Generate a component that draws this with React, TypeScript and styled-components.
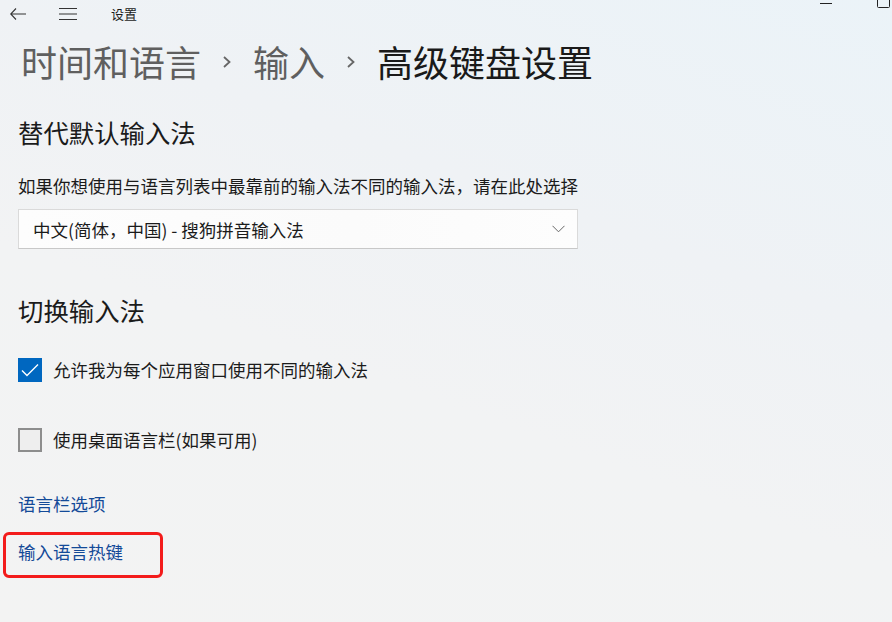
import React from 'react'
import styled, { createGlobalStyle } from 'styled-components'

const GlobalStyle = createGlobalStyle`
  html, body {
    margin: 0;
    padding: 0;
  }
  body {
    font-family: "Noto Sans CJK SC", "Noto Sans", sans-serif;
    color: #1b1b1b;
  }
`

const crumbs = ['时间和语言', '输入']

const App = () => {
  return (
    <Page>
      <GlobalStyle />
      <TitleBar>
        <IconButton $width={16}>
          <svg width='16' height='12' viewBox='0 0 16 12'>
            <path d='M6 0.5 L0.7 6 L6 11.5 M0.7 6 H16' fill='none' stroke='#333' strokeWidth='1.1' />
          </svg>
        </IconButton>
        <IconButton $width={18} $left={33}>
          <svg width='18' height='12' viewBox='0 0 18 12'>
            <path d='M0 0.5 H18 M0 6 H18 M0 11.5 H18' fill='none' stroke='#333' strokeWidth='1.1' />
          </svg>
        </IconButton>
        <AppName>设置</AppName>
        <WindowControls>
          <svg width='12' height='8' viewBox='0 0 12 8'>
            <path d='M0 3.5 H12' stroke='#222' strokeWidth='1' />
          </svg>
          <svg width='13' height='8' viewBox='0 0 13 8'>
            <rect x='0.5' y='-4' width='12' height='11.5' rx='1' fill='none' stroke='#222' strokeWidth='1' />
          </svg>
        </WindowControls>
      </TitleBar>

      <Content>
        <Breadcrumb>
          {crumbs.map(c => (
            <React.Fragment key={c}>
              <Crumb>{c}</Crumb>
              <Chevron width='8' height='12' viewBox='0 0 8 12'>
                <path d='M1 1 L6.5 6 L1 11' fill='none' stroke='#666' strokeWidth='1.8' />
              </Chevron>
            </React.Fragment>
          ))}
          <Crumb $current>高级键盘设置</Crumb>
        </Breadcrumb>

        <SectionTitle $top={32}>替代默认输入法</SectionTitle>
        <Description>如果你想使用与语言列表中最靠前的输入法不同的输入法，请在此处选择</Description>
        <Select>
          <span>中文(简体，中国) - 搜狗拼音输入法</span>
          <svg width='13' height='8' viewBox='0 0 13 8'>
            <path d='M0.5 0.8 L6.5 6.8 L12.5 0.8' fill='none' stroke='#666' strokeWidth='1' />
          </svg>
        </Select>

        <SectionTitle $top={44}>切换输入法</SectionTitle>
        <CheckRow $top={31}>
          <CheckBox $checked>
            <svg width='18' height='14' viewBox='0 0 18 14'>
              <path d='M1 7.5 L6 12.5 L17 1.5' fill='none' stroke='#fff' strokeWidth='1.4' />
            </svg>
          </CheckBox>
          <CheckLabel>允许我为每个应用窗口使用不同的输入法</CheckLabel>
        </CheckRow>
        <CheckRow $top={46}>
          <CheckBox />
          <CheckLabel>使用桌面语言栏(如果可用)</CheckLabel>
        </CheckRow>

        <LinkText $top={39}>语言栏选项</LinkText>
        <LinkText $top={22}>
          输入语言热键
          <Highlight />
        </LinkText>
      </Content>
    </Page>
  )
}

const Page = styled.div`
  width: 892px;
  height: 622px;
  overflow: hidden;
  background: linear-gradient(200deg, #ebf3f8 0%, #eff2f5 35%, #f2f3f4 60%, #f3f3f3 100%);
`

const TitleBar = styled.div`
  height: 28px;
  display: flex;
  align-items: center;
  padding-left: 10px;
`

const IconButton = styled.div<{ $width: number; $left?: number }>`
  width: ${({ $width }) => $width}px;
  margin-left: ${({ $left }) => $left || 0}px;
  display: flex;
  align-items: center;
  svg {
    display: block;
  }
`

const AppName = styled.div`
  margin-left: 34px;
  font-size: 13px;
  line-height: 18px;
  color: #1b1b1b;
`

const WindowControls = styled.div`
  margin-left: auto;
  align-self: flex-start;
  display: flex;
  gap: 45px;
  padding-right: 2px;

  svg {
    display: block;
  }
`

const Content = styled.div`
  padding-left: 18px;
`

const Breadcrumb = styled.div`
  margin-top: 11px;
  height: 44px;
  display: flex;
  align-items: center;
  padding-left: 3px;
  gap: 22px;
`

const Crumb = styled.span<{ $current?: boolean }>`
  font-size: 36px;
  line-height: 44px;
  color: ${({ $current }) => ($current ? '#1a1a1a' : '#5f5f5f')};
  white-space: nowrap;
`

const Chevron = styled.svg`
  display: block;
  margin-top: 2px;
`

const SectionTitle = styled.div<{ $top: number }>`
  margin-top: ${({ $top }) => $top}px;
  font-size: 25.4px;
  line-height: 34px;
  color: #1b1b1b;
`

const Description = styled.div`
  margin-top: 24px;
  font-size: 17.5px;
  line-height: 26px;
  color: #1b1b1b;
  white-space: nowrap;
`

const Select = styled.div`
  margin-top: 10px;
  width: 560px;
  height: 40px;
  box-sizing: border-box;
  border: 1px solid #dadada;
  border-bottom-color: #c8c8c8;
  background: linear-gradient(90deg, #fdfdfd 0%, #fbfbfb 60%, #fdfdfd 100%);
  display: flex;
  align-items: center;
  justify-content: space-between;
  padding: 0 12px 0 14px;
  font-size: 17.5px;
  color: #1b1b1b;

  span {
    white-space: nowrap;
  }

  svg {
    display: block;
  }
`

const CheckRow = styled.div<{ $top: number }>`
  margin-top: ${({ $top }) => $top}px;
  height: 24px;
  display: flex;
  align-items: center;
  gap: 11px;
`

const CheckBox = styled.div<{ $checked?: boolean }>`
  width: 24px;
  height: 24px;
  box-sizing: border-box;
  display: flex;
  align-items: center;
  justify-content: center;
  background: ${({ $checked }) => ($checked ? '#0067c0' : '#eeeeee')};
  border: 2px solid ${({ $checked }) => ($checked ? '#0067c0' : '#8d8d8d')};

  svg {
    display: block;
  }
`

const CheckLabel = styled.span`
  font-size: 17.5px;
  line-height: 24px;
  color: #1b1b1b;
  white-space: nowrap;
`

const LinkText = styled.div<{ $top: number }>`
  position: relative;
  width: max-content;
  margin-top: ${({ $top }) => $top}px;
  font-size: 17.5px;
  line-height: 26px;
  color: #134a98;
  cursor: pointer;
`

const Highlight = styled.div`
  position: absolute;
  left: -15px;
  top: -7px;
  width: 160px;
  height: 46px;
  box-sizing: border-box;
  border: 3px solid #f31b1b;
  border-radius: 6px;
  pointer-events: none;
`

export default App
